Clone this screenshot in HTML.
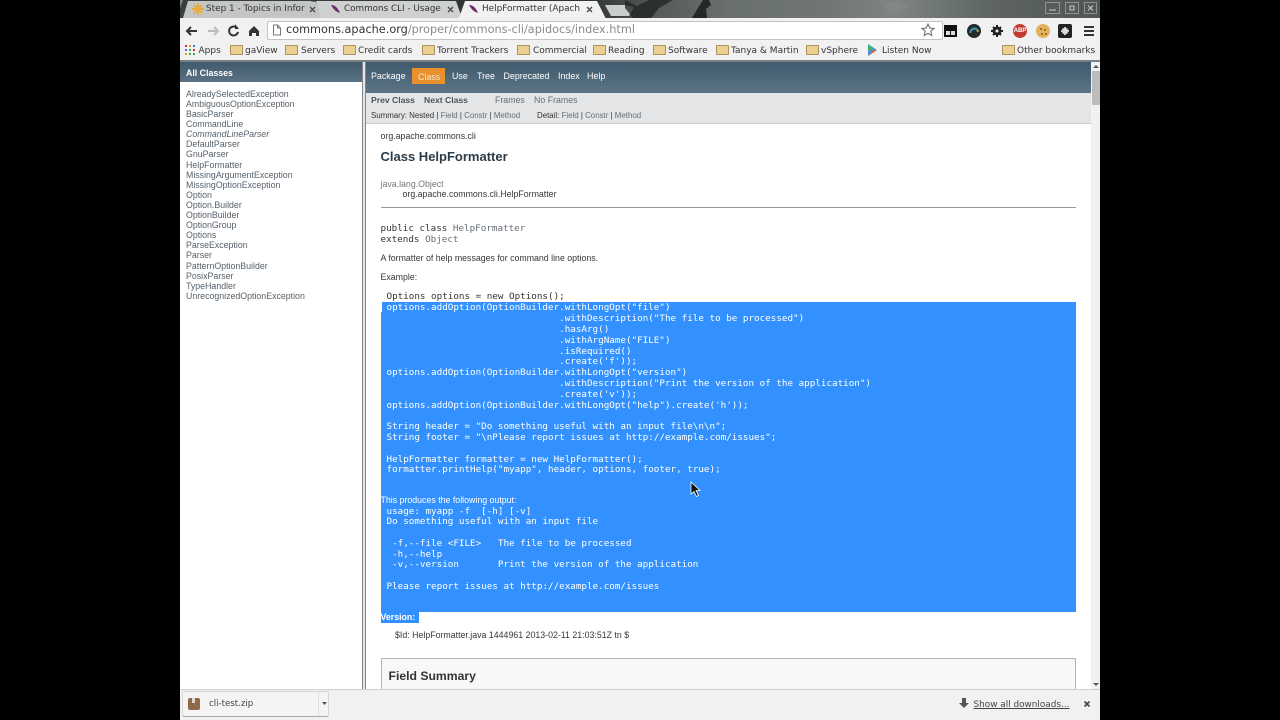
<!DOCTYPE html>
<html><head><meta charset="utf-8"><style>
html,body{margin:0;padding:0;background:#000;width:1280px;height:720px;overflow:hidden}
div,span.a,svg.a{position:absolute}
.t{white-space:pre;font-family:"Liberation Sans",sans-serif}
.c{font-size:8.8px;color:#56616b;line-height:12px}
.m{white-space:pre;font-family:"DejaVu Sans Mono",monospace;font-size:9.25px;line-height:11px;color:#fff}
.d{font-family:"DejaVu Sans",sans-serif;font-size:9px;color:#333;white-space:pre;line-height:12px;top:45px}
.n{font-size:8.9px;color:#fff;top:70px;line-height:12px}
.f{width:11px;height:8px;background:#ecd08f;border:1px solid #a8915c;border-radius:1px;top:45px}
.b{font-size:8.8px;line-height:12px;color:#353833}
.g{color:#666e75}
</style></head><body>
<div id="p" style="left:180px;top:0;width:920px;height:720px;background:#fff;overflow:hidden">
<div style="left:0;top:0;width:920px;height:20px;background:linear-gradient(90deg,#3a3f3d 0,#2e3331 43%,#3d4240 47%,#555c59 52%,#6a716d 60%,#6f7673 70%,#7d8481 78%,#5e6562 88%,#4f5654 100%)"></div>
<svg class="a" style="left:0;top:0" width="920" height="20">
<path d="M0 0h3L0 8z" fill="#7e8381"/>
<path d="M3 18L8 1h122l6 1 6 16z" fill="#c4c6c6"/>
<path d="M141 18l-5-17h140l6 17z" fill="#cfd1d1"/>
<path d="M279 18l6-17h125l7 0 9 18z" fill="#f1f1f1"/>
<path d="M425 5h19l10 2-5 9h-18z" fill="#c9cdcb"/>
<path d="M445 0l12 6 12-6h24l-14 8-8 10h-18l-8-10z" fill="#1f2322" opacity=".75"/>
<path d="M512 18l6-10 5-8h6l2 5-5 4 1 9z" fill="#232726"/>
<path d="M700 0l30 6-20 8z" fill="#858c89" opacity=".6"/>
</svg>
<div style="left:0;top:18px;width:920px;height:44px;background:#f1f1f1"></div>
<svg class="a" style="left:11px;top:2px" width="14" height="14"><path d="M7 1v12M1 7h12M3 3l8 8M11 3l-8 8" stroke="#e6aa3d" stroke-width="2"/></svg>
<div class="t" style="left:26px;top:3px;font:8.9px/12px 'DejaVu Sans',sans-serif;color:#333">Step 1 - Topics in Infor</div>
<svg class="a" style="left:150px;top:3px" width="12" height="12"><path d="M1 2c4 0 7 3 9 8C6 9 3 6 1 2z" fill="#6d2c6e"/></svg>
<div class="t" style="left:164px;top:3px;font:8.8px/12px 'DejaVu Sans',sans-serif;color:#333">Commons CLI - Usage</div>
<svg class="a" style="left:288px;top:3px" width="12" height="12"><path d="M1 2c4 0 7 3 9 8C6 9 3 6 1 2z" fill="#6d2c6e"/></svg>
<div class="t" style="left:302px;top:3px;font:8.9px/12px 'DejaVu Sans',sans-serif;color:#333">HelpFormatter (Apach</div>
<svg class="a" style="left:0;top:0" width="420" height="20"><path d="M130 7l5 5m0-5l-5 5M268 7l5 5m0-5l-5 5M407 7l5 5m0-5l-5 5" stroke="#444" stroke-width="1.3"/></svg>
<svg class="a" style="left:0;top:0" width="920" height="18"><g fill="none" stroke="#c9cdcb" stroke-width="1"><rect x="865.500" y="2.500" width="14" height="11" opacity=".5"/><rect x="885.500" y="2.500" width="13" height="11" opacity=".5"/><rect x="904.500" y="2.500" width="12" height="11" opacity=".5"/><path d="M869 10h7"/><rect x="890" y="6" width="4" height="4"/><path d="M908 5.500l5 5m0-5l-5 5"/></g></svg>
<svg class="a" style="left:5px;top:22px" width="80" height="18"><path d="M2 9h10M6 5L2 9l4 4" stroke="#333" stroke-width="2" fill="none"/><path d="M23 9h10M29 5l4 4-4 4" stroke="#bbb" stroke-width="2" fill="none"/><path d="M52 6a4.500 4.500 0 1 0 1 4" stroke="#333" stroke-width="2" fill="none"/><path d="M50 2v5h4z" fill="#333"/><path d="M64 9l5-5 5 5v5h-3v-3h-4v3h-3z" fill="#333"/></svg>
<div style="left:87px;top:21px;width:674px;height:17px;background:#fff;border:1px solid #c4c4c4;border-radius:2px"></div>
<svg class="a" style="left:92px;top:24px" width="10" height="12"><path d="M1.500 1h4l3 3v7h-7zM5.500 1v3h3" fill="#fff" stroke="#777"/></svg>
<div class="t" style="left:106px;top:22px;font:11.27px/16px 'DejaVu Sans',sans-serif;color:#333">commons.apache.org<span style="color:#8a8a8a">/proper/commons-cli/apidocs/index.html</span></div>
<svg class="a" style="left:741px;top:23px" width="14" height="14"><path d="M7 1l1.800 4 4.200.4-3.200 2.800 1 4.300L7 10.300 3.200 12.500l1-4.300L1 5.400 5.200 5z" fill="#fff" stroke="#666"/></svg>
<div style="left:764px;top:25px;width:13px;height:12px;background:#111"></div><div style="left:766px;top:31px;width:4px;height:4px;background:#ddd"></div><div style="left:771px;top:31px;width:4px;height:4px;background:#ddd"></div>
<div style="left:787px;top:24px;width:14px;height:14px;border-radius:50%;background:#26282c"></div>
<svg class="a" style="left:787px;top:24px" width="14" height="14"><path d="M3.500 9a4 4 0 0 1 7-3" stroke="#3b9aa8" stroke-width="2" fill="none"/><path d="M10.500 6l.5 2" stroke="#c9a13c" stroke-width="2"/></svg>
<svg class="a" style="left:810px;top:24px" width="14" height="14"><circle cx="7" cy="7" r="3" fill="none" stroke="#222" stroke-width="3"/><path d="M7 1v12M1 7h12M3 3l8 8M11 3l-8 8" stroke="#222" stroke-width="2"/><circle cx="7" cy="7" r="1.500" fill="#f1f1f1"/></svg>
<div style="left:833px;top:24px;width:14px;height:14px;border-radius:50%;background:#c33a32"></div><div class="t" style="left:833px;top:27px;width:14px;text-align:center;font-size:6px;font-weight:bold;line-height:8px;color:#fff">ABP</div>
<div style="left:856px;top:24px;width:14px;height:14px;border-radius:50%;background:#e3b35c"></div>
<svg class="a" style="left:856px;top:24px" width="14" height="14"><circle cx="5" cy="5" r="1" fill="#8a5a24"/><circle cx="9" cy="6" r="1" fill="#8a5a24"/><circle cx="6" cy="10" r="1" fill="#8a5a24"/><circle cx="10" cy="10" r="1" fill="#8a5a24"/></svg>
<div style="left:878px;top:24px;width:14px;height:14px;background:#222;border-radius:2px"></div>
<svg class="a" style="left:878px;top:24px" width="14" height="14"><path d="M7 3v8M3 7h8M4.500 4.500l5 5m0-5l-5 5" stroke="#ddd" stroke-width="1.800"/></svg>
<div style="left:904px;top:26px;width:10px;height:2px;background:#333;box-shadow:0 4px #333,0 8px #333"></div>
<svg class="a" style="left:5px;top:44px" width="12" height="12"><g fill="#c33"><rect x="0" y="1" width="2" height="2"/><rect x="8" y="5" width="2" height="2"/></g><g fill="#d9a02c"><rect x="4" y="1" width="2" height="2"/><rect x="0" y="9" width="2" height="2"/></g><g fill="#3a7bd5"><rect x="8" y="1" width="2" height="2"/><rect x="0" y="5" width="2" height="2"/></g><g fill="#4a4"><rect x="4" y="5" width="2" height="2"/><rect x="4" y="9" width="2" height="2"/><rect x="8" y="9" width="2" height="2"/></g></svg>
<div class="d" style="left:18.500px">Apps</div>
<div class="f" style="left:50px"></div><div class="d" style="left:65px">gaView</div>
<div class="f" style="left:105px"></div><div class="d" style="left:121px">Servers</div>
<div class="f" style="left:163px"></div><div class="d" style="left:178px">Credit cards</div>
<div class="f" style="left:242px"></div><div class="d" style="left:257px">Torrent Trackers</div>
<div class="f" style="left:337px"></div><div class="d" style="left:353px">Commercial</div>
<div class="f" style="left:413px"></div><div class="d" style="left:428px">Reading</div>
<div class="f" style="left:473px"></div><div class="d" style="left:488px">Software</div>
<div class="f" style="left:536px"></div><div class="d" style="left:551px">Tanya &amp; Martin</div>
<div class="f" style="left:626px"></div><div class="d" style="left:641px">vSphere</div>
<svg class="a" style="left:687px;top:44px" width="11" height="12"><path d="M1 0l9 6-9 6z" fill="#3a9ad9"/><path d="M1 0l5 6H1z" fill="#4bb35b"/><path d="M6 6l4 0-9 6z" fill="#e2574c"/></svg>
<div class="d" style="left:702px">Listen Now</div>
<div class="f" style="left:822px"></div><div class="d" style="left:837px">Other bookmarks</div>
<div style="left:0;top:60px;width:920px;height:2px;background:#7a7f82"></div>

<div style="left:0;top:62px;width:182px;height:20px;background:linear-gradient(#3f5a6c,#5a7283)"></div>
<div class="t" style="left:6px;top:67px;font-size:8.8px;font-weight:bold;line-height:12px;color:#fff">All Classes</div>
<div class="t c" style="left:6px;top:88px">AlreadySelectedException</div><div class="t c" style="left:6px;top:98px">AmbiguousOptionException</div><div class="t c" style="left:6px;top:108px">BasicParser</div><div class="t c" style="left:6px;top:118px">CommandLine</div><div class="t c" style="left:6px;top:128px;font-style:italic">CommandLineParser</div><div class="t c" style="left:6px;top:138px">DefaultParser</div><div class="t c" style="left:6px;top:148px">GnuParser</div><div class="t c" style="left:6px;top:159px">HelpFormatter</div><div class="t c" style="left:6px;top:169px">MissingArgumentException</div><div class="t c" style="left:6px;top:179px">MissingOptionException</div><div class="t c" style="left:6px;top:189px">Option</div><div class="t c" style="left:6px;top:199px">Option.Builder</div><div class="t c" style="left:6px;top:209px">OptionBuilder</div><div class="t c" style="left:6px;top:219px">OptionGroup</div><div class="t c" style="left:6px;top:229px">Options</div><div class="t c" style="left:6px;top:239px">ParseException</div><div class="t c" style="left:6px;top:249px">Parser</div><div class="t c" style="left:6px;top:260px">PatternOptionBuilder</div><div class="t c" style="left:6px;top:270px">PosixParser</div><div class="t c" style="left:6px;top:280px">TypeHandler</div><div class="t c" style="left:6px;top:290px">UnrecognizedOptionException</div>
<div style="left:182px;top:62px;width:4px;height:627px;background:#e4e4e4;border-left:1px solid #888;border-right:1px solid #888;box-sizing:border-box"></div>

<div style="left:186px;top:62px;width:725px;height:32px;background:linear-gradient(#3f5a6c,#5d7688)"></div>
<div class="t n" style="left:191px">Package</div>
<div style="left:232px;top:68px;width:33px;height:16px;background:#e8922f"></div>
<div class="t n" style="left:238px;color:#f8e3c8;top:71px">Class</div>
<div class="t n" style="left:272px">Use</div>
<div class="t n" style="left:297px">Tree</div>
<div class="t n" style="left:323.500px">Deprecated</div>
<div class="t n" style="left:378px">Index</div>
<div class="t n" style="left:407px">Help</div>
<div style="left:186px;top:93px;width:725px;height:31px;background:#e3e5e7;border-bottom:1px solid #ccc;box-sizing:border-box"></div>
<div class="t" style="left:191px;top:94px;font-size:8.6px;line-height:12px;font-weight:bold;color:#4a5560">Prev Class</div>
<div class="t" style="left:244px;top:94px;font-size:8.6px;line-height:12px;font-weight:bold;color:#4a5560">Next Class</div>
<div class="t g" style="left:315px;top:94px;font-size:8.8px;line-height:12px">Frames</div>
<div class="t g" style="left:354px;top:94px;font-size:8.8px;line-height:12px">No Frames</div>
<div class="t" style="left:191px;top:110px;font-size:7.9px;line-height:12px;color:#333">Summary: Nested | <span class="g">Field</span> | <span class="g">Constr</span> | <span class="g">Method</span></div>
<div class="t" style="left:357px;top:110px;font-size:7.9px;line-height:12px;color:#333">Detail: <span class="g">Field</span> | <span class="g">Constr</span> | <span class="g">Method</span></div>
<div class="t b" style="left:200.500px;top:130px">org.apache.commons.cli</div>
<div class="t" style="left:200.500px;top:149px;font-size:13px;line-height:16px;font-weight:bold;color:#2c3c48">Class HelpFormatter</div>
<div class="t b g" style="left:200.500px;top:178px;color:#777">java.lang.Object</div>
<div class="t b" style="left:222.500px;top:188px">org.apache.commons.cli.HelpFormatter</div>
<div style="left:200.500px;top:207px;width:695.500px;height:1px;background:#999"></div>
<div class="m" style="left:200.500px;top:223px;color:#333">public class <span class="g">HelpFormatter</span></div>
<div class="m" style="left:200.500px;top:234px;color:#333">extends <span class="g">Object</span></div>
<div class="t b" style="left:200.500px;top:252px">A formatter of help messages for command line options.</div>
<div class="t b" style="left:200.500px;top:271px">Example:</div>
<div class="m" style="left:206.500px;top:291px;color:#333">Options options = new Options();</div>

<div style="left:202px;top:302px;width:694px;height:310px;background:#3390ff"></div>
<div style="left:200.500px;top:312px;width:695.500px;height:300px;background:#3390ff"></div>
<div style="left:200.500px;top:612px;width:38.500px;height:11px;background:#3390ff"></div>
<div class="m" style="left:206.500px;top:303.400px;line-height:10.8px">options.addOption(OptionBuilder.withLongOpt("file")
                               .withDescription("The file to be processed")
                               .hasArg()
                               .withArgName("FILE")
                               .isRequired()
                               .create('f'));
options.addOption(OptionBuilder.withLongOpt("version")
                               .withDescription("Print the version of the application")
                               .create('v'));
options.addOption(OptionBuilder.withLongOpt("help").create('h'));

String header = "Do something useful with an input file\n\n";
String footer = "\nPlease report issues at http://example.com/issues";

HelpFormatter formatter = new HelpFormatter();
formatter.printHelp("myapp", header, options, footer, true);</div>
<div class="t b" style="left:200.500px;top:494px;color:#fff">This produces the following output:</div>
<div class="m" style="left:206.500px;top:506.500px;line-height:10.8px">usage: myapp -f  [-h] [-v]
Do something useful with an input file

 -f,--file &lt;FILE&gt;   The file to be processed
 -h,--help
 -v,--version       Print the version of the application

Please report issues at http://example.com/issues</div>
<div class="t b" style="left:200.500px;top:611px;font-weight:bold;color:#fff">Version:</div>
<div class="t b" style="left:215px;top:629px">$Id: HelpFormatter.java 1444961 2013-02-11 21:03:51Z tn $</div>
<div style="left:200.500px;top:658px;width:695.500px;height:40px;background:#f8f8f8;border:1px solid #b5b5b5;box-sizing:border-box"></div>
<div class="t" style="left:208.500px;top:668px;font-size:12.200px;line-height:16px;font-weight:bold;color:#333">Field Summary</div>

<svg class="a" style="left:510px;top:481px" width="12" height="17"><path d="M1 1v12l3-2.500 2.500 5 2-1-2.500-5h4z" fill="#111" stroke="#fff" stroke-width=".8"/></svg>

<div style="left:911px;top:62px;width:9px;height:627px;background:#f1f1f1"></div>
<div style="left:912px;top:71px;width:8px;height:34px;background:#bcbcbc"></div>
<svg class="a" style="left:913px;top:64px" width="6" height="5"><path d="M0 4l3-3 3 3z" fill="#555"/></svg>
<svg class="a" style="left:913px;top:682px" width="6" height="5"><path d="M0 1l3 3 3-3z" fill="#555"/></svg>

<div style="left:0;top:689px;width:920px;height:31px;background:#f0f1f2;border-top:1px solid #cfcfcf;box-sizing:border-box"></div>
<div style="left:2px;top:691px;width:147px;height:26px;background:#f4f4f5;border:1px solid #d6d6d6;border-bottom:1px solid #aaa;border-radius:2px;box-sizing:border-box"></div>
<div style="left:138px;top:692px;width:1px;height:24px;background:#ddd"></div>
<div style="left:8px;top:698px;width:12px;height:12px;background:#8d6b48;border-radius:2px"></div>
<div style="left:12px;top:698px;width:3px;height:5px;background:#e3d6c2"></div>
<div class="t" style="left:29px;top:698px;font:8.600px/12px 'DejaVu Sans',sans-serif;color:#444">cli-test.zip</div>
<svg class="a" style="left:142px;top:702px" width="5" height="4"><path d="M0 0h5L2.500 3z" fill="#555"/></svg>
<svg class="a" style="left:779px;top:698px" width="10" height="11"><path d="M3 0h4v5h3l-5 5-5-5h3z" fill="#555"/></svg>
<div class="t" style="left:793.500px;top:699px;font:8.900px/12px 'DejaVu Sans',sans-serif;color:#444;text-decoration:underline">Show all downloads...</div>
<svg class="a" style="left:903px;top:700px" width="8" height="8"><path d="M1.500 1.500l5 5m0-5l-5 5" stroke="#444" stroke-width="1.600"/></svg>
</div>
</body></html>
